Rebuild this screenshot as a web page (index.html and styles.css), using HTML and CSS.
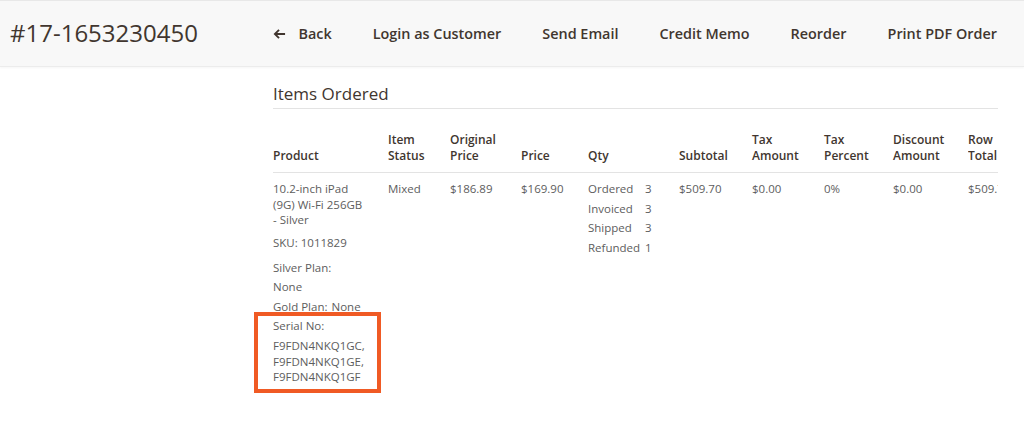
FILE: index.html
```html
<!DOCTYPE html>
<html lang="en">
<head>
<meta charset="utf-8">
<title>#17-1653230450</title>
<link rel="stylesheet" href="styles.css">
</head>
<body>
<header class="page-header">
  <h1 class="page-title">#17-1653230450</h1>
  <nav class="page-actions">
    <button class="action back">
      <svg class="back-icon" viewBox="0 0 14 12" width="13" height="12" aria-hidden="true">
        <path d="M13 6H2M6.5 1.5L2 6l4.5 4.5" fill="none" stroke="#41362f" stroke-width="2" stroke-linecap="butt"/>
      </svg>
      <span>Back</span>
    </button>
    <button class="action">Login as Customer</button>
    <button class="action">Send Email</button>
    <button class="action">Credit Memo</button>
    <button class="action">Reorder</button>
    <button class="action">Print PDF Order</button>
  </nav>
</header>

<main class="content">
  <section class="items-section">
    <h2 class="section-title">Items Ordered</h2>
    <table class="items-table">
      <colgroup>
        <col class="c-product">
        <col class="c-status">
        <col class="c-orig">
        <col class="c-price">
        <col class="c-qty">
        <col class="c-subtotal">
        <col class="c-tax">
        <col class="c-taxp">
        <col class="c-discount">
        <col class="c-total">
      </colgroup>
      <thead>
        <tr>
          <th>Product</th>
          <th>Item<br>Status</th>
          <th>Original<br>Price</th>
          <th>Price</th>
          <th>Qty</th>
          <th>Subtotal</th>
          <th>Tax<br>Amount</th>
          <th>Tax<br>Percent</th>
          <th>Discount<br>Amount</th>
          <th>Row<br>Total</th>
        </tr>
      </thead>
      <tbody>
        <tr>
          <td>
            <div class="product">
              <div class="product-name">10.2-inch iPad (9G) Wi-Fi 256GB - Silver</div>
              <div class="product-sku">SKU: 1011829</div>
              <div class="options">
                <div class="option"><span class="opt-label">Silver Plan:</span><span class="opt-value">None</span></div>
                <div class="option"><span class="opt-label">Gold Plan:</span><span class="opt-value">None</span></div>
                <div class="option serial">
                  <span class="opt-label">Serial No:</span>
                  <span class="opt-value">F9FDN4NKQ1GC, F9FDN4NKQ1GE, F9FDN4NKQ1GF</span>
                  <span class="highlight" aria-hidden="true"></span>
                </div>
              </div>
            </div>
          </td>
          <td>Mixed</td>
          <td>$186.89</td>
          <td>$169.90</td>
          <td>
            <div class="qty">
              <span>Ordered</span><span>3</span>
              <span>Invoiced</span><span>3</span>
              <span>Shipped</span><span>3</span>
              <span>Refunded</span><span>1</span>
            </div>
          </td>
          <td>$509.70</td>
          <td>$0.00</td>
          <td>0%</td>
          <td>$0.00</td>
          <td>$509.70</td>
        </tr>
      </tbody>
    </table>
  </section>
</main>
</body>
</html>
```

FILE: styles.css
```css
* { box-sizing: border-box; }

html, body {
  margin: 0;
  padding: 0;
  background: #ffffff;
  font-family: "Open Sans", "Liberation Sans", Arial, sans-serif;
  color: #41362f;
}

body { min-height: 100vh; }

.page-header {
  height: 67px;
  display: flex;
  align-items: center;
  background: #f8f8f8;
  border-top: 1px solid #e8e8e8;
  border-bottom: 1px solid #ececec;
  box-shadow: 0 1px 2px rgba(0, 0, 0, 0.04);
  padding: 0 27px 0 10px;
}

.page-title {
  margin: 0;
  font-size: 24px;
  font-weight: 400;
  color: #41362f;
  line-height: 1;
  padding-bottom: 1px;
}

.page-actions {
  margin-left: auto;
  display: flex;
  align-items: center;
  gap: 41px;
}

.action {
  display: flex;
  align-items: center;
  gap: 13px;
  border: 0;
  background: none;
  padding: 0;
  font-family: inherit;
  font-size: 14.4px;
  font-weight: 600;
  color: #41362f;
  line-height: 20px;
  cursor: pointer;
}

.back-icon { display: block; }

.content {
  padding: 16px 26px 40px 273px;
}

.section-title {
  margin: 0;
  font-size: 17px;
  font-weight: 400;
  line-height: 22px;
  color: #41362f;
  padding-bottom: 3px;
  border-bottom: 1px solid #e3e3e3;
}

.items-table {
  margin-top: 23px;
  border-collapse: collapse;
  table-layout: fixed;
  width: 725px;
  font-size: 11.5px;
}

.c-product { width: 115px; }
.c-status { width: 62px; }
.c-orig { width: 71px; }
.c-price { width: 67px; }
.c-qty { width: 91px; }
.c-subtotal { width: 73px; }
.c-tax { width: 72px; }
.c-taxp { width: 69px; }
.c-discount { width: 75px; }
.c-total { width: 30px; }

.items-table th {
  text-align: left;
  vertical-align: bottom;
  font-weight: 600;
  font-size: 12px;
  line-height: 16px;
  color: #41362f;
  padding: 0 0 8px 0;
  border-bottom: 1px solid #e3e3e3;
  white-space: nowrap;
}

.items-table td {
  text-align: left;
  vertical-align: top;
  color: #5d5d5d;
  line-height: 15.5px;
  padding: 8px 0 0 0;
  white-space: nowrap;
}

.items-table th:last-child,
.items-table td:last-child {
  overflow: hidden;
}

.items-table td:first-child { white-space: normal; }

.product { width: 90px; }

.product-sku { margin-top: 7.5px; }

.options { margin-top: 9px; }

.option {
  display: flex;
  flex-wrap: wrap;
  column-gap: 4px;
  row-gap: 4px;
  margin-bottom: 4px;
}

.serial {
  position: relative;
  flex-direction: column;
  row-gap: 4.5px;
}

.highlight {
  position: absolute;
  top: -6px;
  left: -19px;
  right: -18px;
  bottom: -8px;
  border: 4px solid #f05a24;
  pointer-events: none;
}

.qty {
  display: grid;
  grid-template-columns: auto auto;
  justify-content: start;
  column-gap: 5px;
  row-gap: 4px;
}
```
